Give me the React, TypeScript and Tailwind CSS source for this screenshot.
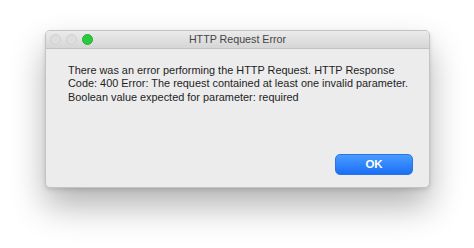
export default function App() {
  return (
    <div className="w-[474px] h-[248px] bg-white pt-[30px] pl-[45px] font-['Liberation_Sans',Arial,sans-serif]">
      <div className="w-[385px] h-[158px] rounded-[5px] bg-[#ececec] border border-[#c4c4c4] shadow-[0_18px_34px_rgba(0,0,0,0.3),0_2px_4px_rgba(0,0,0,0.12)] flex flex-col overflow-hidden">
        <div className="h-[18px] shrink-0 relative flex items-center bg-gradient-to-b from-[#ebebeb] to-[#d6d6d6] border-b border-[#c2c2c2]">
          <div className="flex gap-[5px] pl-[4px]">
            <span className="w-[11px] h-[11px] rounded-full bg-[#dedede] border border-[#cfcfcf]" />
            <span className="w-[11px] h-[11px] rounded-full bg-[#dedede] border border-[#cfcfcf]" />
            <span className="w-[11px] h-[11px] rounded-full bg-[#2ac940] border border-[#22b032]" />
          </div>
          <div className="absolute inset-0 flex items-center justify-center text-[10.7px] text-[#454545]">
            HTTP Request Error
          </div>
        </div>
        <div className="flex-1 flex flex-col pl-[22px] pr-[16px] pt-[15px] pb-[12px]">
          <p className="text-[10.9px] leading-[13.4px] text-[#1e1e1e] whitespace-nowrap">
            There was an error performing the HTTP Request. HTTP Response
            <br />
            Code: 400 Error: The request contained at least one invalid parameter.
            <br />
            Boolean value expected for parameter: required
          </p>
          <div className="mt-auto flex justify-end">
            <button className="w-[78px] h-[21px] rounded-[5px] bg-gradient-to-b from-[#4a9cff] to-[#1a6ef5] border border-[#2a74e6] text-white text-[11.5px] font-semibold flex items-center justify-center">
              OK
            </button>
          </div>
        </div>
      </div>
    </div>
  );
}
